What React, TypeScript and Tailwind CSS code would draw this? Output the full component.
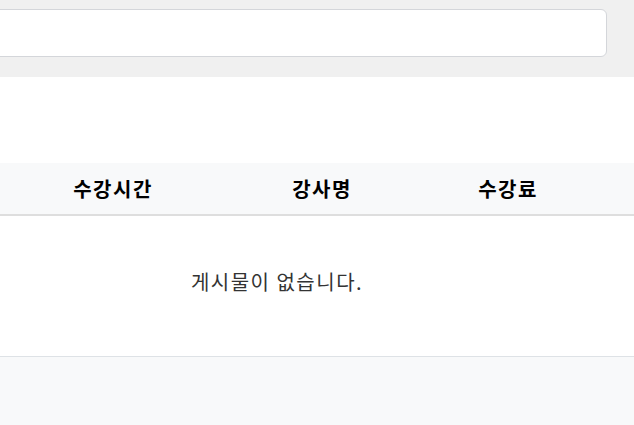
import React from "react";

export default function App() {
  return (
    <div className="w-[634px] h-[425px] overflow-hidden bg-[#f8f9fa]" style={{ fontFamily: '"Noto Sans CJK KR", "Noto Sans", sans-serif' }}>
      <div className="h-[77px] bg-[#f0f0f0] pt-[9px] pr-[27px]">
        <div className="-ml-[20px] h-[48px] rounded-[6px] border border-[#d4d6da] bg-white" />
      </div>
      <div className="bg-white pt-[86px]">
        <div className="-ml-[80px] w-[714px]">
          <div className="flex h-[53px] items-center bg-[#f8f9fa] border-b-[2px] border-[#dedede] text-[20px] font-bold tracking-[1.5px] text-black">
            <div className="w-[100px]" />
            <div className="w-[186px] text-center">수강시간</div>
            <div className="w-[232px] text-center">강사명</div>
            <div className="w-[140px] text-center">수강료</div>
            <div className="w-[56px]" />
          </div>
          <div className="flex h-[141px] items-center justify-center pb-[9px] border-b border-[#dee2e6] bg-white text-[20px] tracking-[1.5px] text-[#333]">
            게시물이 없습니다.
          </div>
        </div>
      </div>
    </div>
  );
}
